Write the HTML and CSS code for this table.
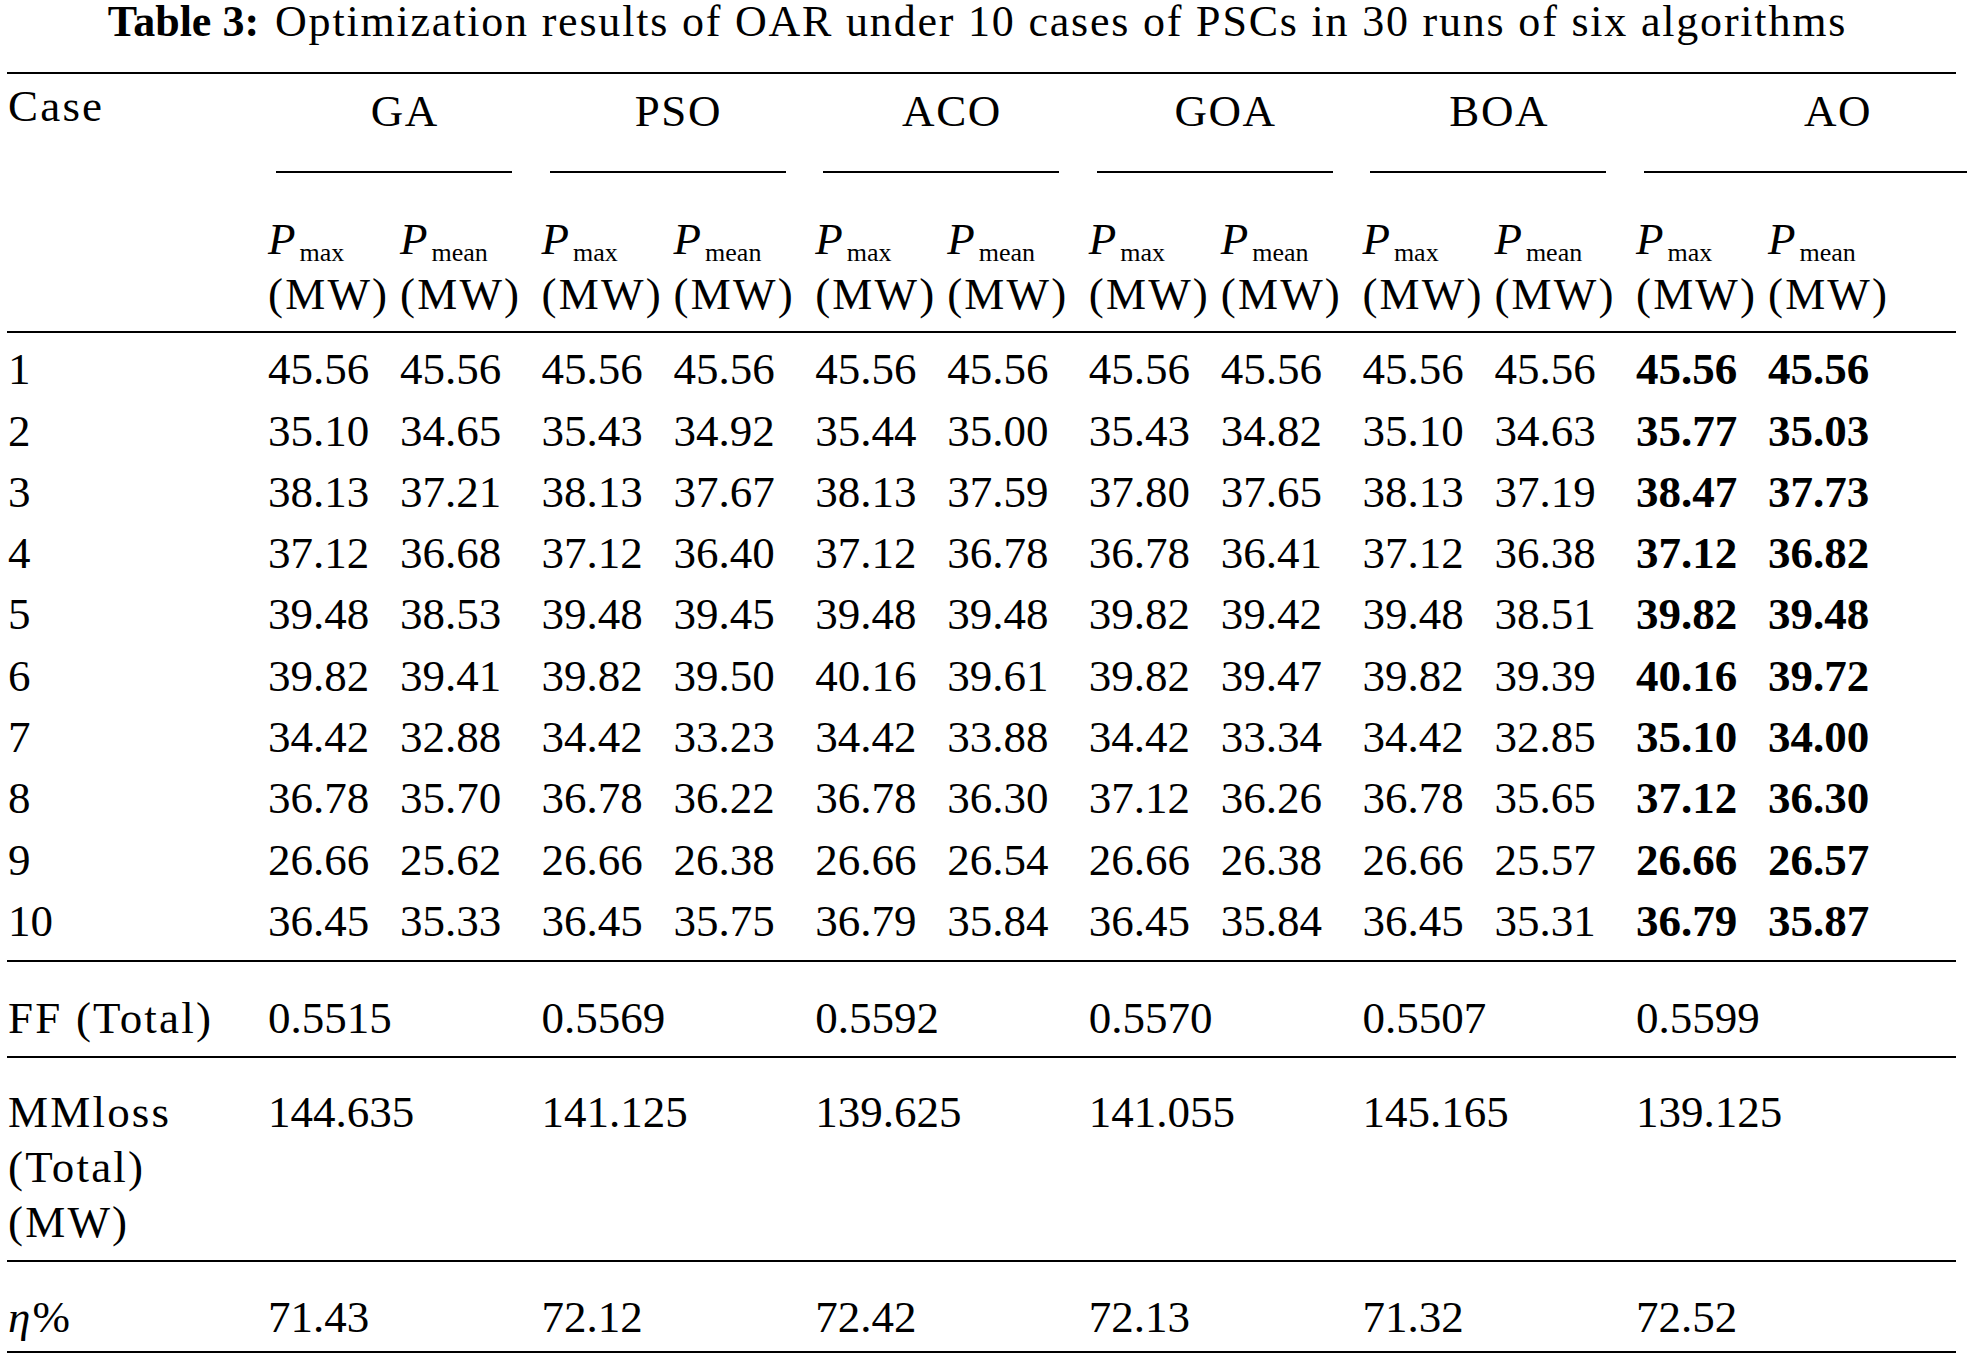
FILE: index.html
```html
<!DOCTYPE html>
<html lang="en">
<head>
<meta charset="utf-8">
<title>Table 3: Optimization results of OAR</title>
<link rel="stylesheet" href="styles.css">
</head>
<body>
<div class="page">
  <p class="caption"><b class="cap-num">Table 3:</b><span class="cap-text">Optimization results of OAR under 10 cases of PSCs in 30 runs of six algorithms</span></p>
  <table class="results">
    <colgroup>
      <col class="c-case">
      <col class="c-a"><col class="c-b">
      <col class="c-a"><col class="c-b">
      <col class="c-a"><col class="c-b">
      <col class="c-a"><col class="c-b">
      <col class="c-a"><col class="c-b">
      <col class="c-a"><col class="c-last">
    </colgroup>
    <thead>
      <tr class="groups">
        <th rowspan="2" class="case label">Case</th>
        <th colspan="2" class="grp"><span class="grp-name">GA</span><span class="grp-rule"></span></th>
        <th colspan="2" class="grp"><span class="grp-name">PSO</span><span class="grp-rule"></span></th>
        <th colspan="2" class="grp"><span class="grp-name">ACO</span><span class="grp-rule"></span></th>
        <th colspan="2" class="grp"><span class="grp-name">GOA</span><span class="grp-rule"></span></th>
        <th colspan="2" class="grp"><span class="grp-name">BOA</span><span class="grp-rule"></span></th>
        <th colspan="2" class="grp grp-ao"><span class="grp-name">AO</span><span class="grp-rule"></span></th>
      </tr>
      <tr class="units">
        <th><i>P</i><sub>max</sub><br><span class="label">(MW)</span></th>
        <th><i>P</i><sub>mean</sub><br><span class="label">(MW)</span></th>
        <th><i>P</i><sub>max</sub><br><span class="label">(MW)</span></th>
        <th><i>P</i><sub>mean</sub><br><span class="label">(MW)</span></th>
        <th><i>P</i><sub>max</sub><br><span class="label">(MW)</span></th>
        <th><i>P</i><sub>mean</sub><br><span class="label">(MW)</span></th>
        <th><i>P</i><sub>max</sub><br><span class="label">(MW)</span></th>
        <th><i>P</i><sub>mean</sub><br><span class="label">(MW)</span></th>
        <th><i>P</i><sub>max</sub><br><span class="label">(MW)</span></th>
        <th><i>P</i><sub>mean</sub><br><span class="label">(MW)</span></th>
        <th><i>P</i><sub>max</sub><br><span class="label">(MW)</span></th>
        <th><i>P</i><sub>mean</sub><br><span class="label">(MW)</span></th>
      </tr>
    </thead>
    <tbody class="data">
      <tr><td class="num">1</td><td>45.56</td><td>45.56</td><td>45.56</td><td>45.56</td><td>45.56</td><td>45.56</td><td>45.56</td><td>45.56</td><td>45.56</td><td>45.56</td><td class="best">45.56</td><td class="best">45.56</td></tr>
      <tr><td class="num">2</td><td>35.10</td><td>34.65</td><td>35.43</td><td>34.92</td><td>35.44</td><td>35.00</td><td>35.43</td><td>34.82</td><td>35.10</td><td>34.63</td><td class="best">35.77</td><td class="best">35.03</td></tr>
      <tr><td class="num">3</td><td>38.13</td><td>37.21</td><td>38.13</td><td>37.67</td><td>38.13</td><td>37.59</td><td>37.80</td><td>37.65</td><td>38.13</td><td>37.19</td><td class="best">38.47</td><td class="best">37.73</td></tr>
      <tr><td class="num">4</td><td>37.12</td><td>36.68</td><td>37.12</td><td>36.40</td><td>37.12</td><td>36.78</td><td>36.78</td><td>36.41</td><td>37.12</td><td>36.38</td><td class="best">37.12</td><td class="best">36.82</td></tr>
      <tr><td class="num">5</td><td>39.48</td><td>38.53</td><td>39.48</td><td>39.45</td><td>39.48</td><td>39.48</td><td>39.82</td><td>39.42</td><td>39.48</td><td>38.51</td><td class="best">39.82</td><td class="best">39.48</td></tr>
      <tr><td class="num">6</td><td>39.82</td><td>39.41</td><td>39.82</td><td>39.50</td><td>40.16</td><td>39.61</td><td>39.82</td><td>39.47</td><td>39.82</td><td>39.39</td><td class="best">40.16</td><td class="best">39.72</td></tr>
      <tr><td class="num">7</td><td>34.42</td><td>32.88</td><td>34.42</td><td>33.23</td><td>34.42</td><td>33.88</td><td>34.42</td><td>33.34</td><td>34.42</td><td>32.85</td><td class="best">35.10</td><td class="best">34.00</td></tr>
      <tr><td class="num">8</td><td>36.78</td><td>35.70</td><td>36.78</td><td>36.22</td><td>36.78</td><td>36.30</td><td>37.12</td><td>36.26</td><td>36.78</td><td>35.65</td><td class="best">37.12</td><td class="best">36.30</td></tr>
      <tr><td class="num">9</td><td>26.66</td><td>25.62</td><td>26.66</td><td>26.38</td><td>26.66</td><td>26.54</td><td>26.66</td><td>26.38</td><td>26.66</td><td>25.57</td><td class="best">26.66</td><td class="best">26.57</td></tr>
      <tr><td class="num">10</td><td>36.45</td><td>35.33</td><td>36.45</td><td>35.75</td><td>36.79</td><td>35.84</td><td>36.45</td><td>35.84</td><td>36.45</td><td>35.31</td><td class="best">36.79</td><td class="best">35.87</td></tr>
    </tbody>
    <tbody class="summary">
      <tr class="row-ff"><td class="label">FF (Total)</td><td colspan="2">0.5515</td><td colspan="2">0.5569</td><td colspan="2">0.5592</td><td colspan="2">0.5570</td><td colspan="2">0.5507</td><td colspan="2">0.5599</td></tr>
      <tr class="row-loss"><td class="label">MMloss<br>(Total)<br>(MW)</td><td colspan="2">144.635</td><td colspan="2">141.125</td><td colspan="2">139.625</td><td colspan="2">141.055</td><td colspan="2">145.165</td><td colspan="2">139.125</td></tr>
      <tr class="row-eta"><td class="label"><i>η</i>%</td><td colspan="2">71.43</td><td colspan="2">72.12</td><td colspan="2">72.42</td><td colspan="2">72.13</td><td colspan="2">71.32</td><td colspan="2">72.52</td></tr>
    </tbody>
  </table>
</div>
</body>
</html>
```

FILE: styles.css
```css
html, body {
  margin: 0;
  padding: 0;
  background: #ffffff;
}

body {
  font-family: "Liberation Serif", "Times New Roman", serif;
  color: #000000;
}

.page {
  padding-left: 7px;
  width: 1949px;
}

.caption {
  margin: 0 0 28px 0;
  padding-right: 8px;
  font-size: 44px;
  line-height: 44px;
  text-align: center;
  white-space: nowrap;
}

.cap-num {
  font-weight: bold;
}

.cap-text {
  margin-left: 16px;
  letter-spacing: 1.8px;
}

.results {
  width: 1949px;
  table-layout: fixed;
  border-collapse: separate;
  border-spacing: 0;
  border-top: 2px solid #000;
  font-size: 45px;
  line-height: 55px;
}

.c-case { width: 261px; }
.c-a { width: 132px; }
.c-b { width: 141.6px; }
.c-last { width: 188px; }

.results th,
.results td {
  padding: 0;
  text-align: left;
  vertical-align: top;
  font-weight: normal;
  white-space: nowrap;
}

.results .label {
  letter-spacing: 2.2px;
}

.results td.best {
  font-weight: bold;
}

/* header row: algorithm groups */
.results .case {
  padding: 5px 0 0 1px;
  border-bottom: 2px solid #000;
}

.results .grp {
  padding-top: 10px;
}

.grp-name {
  display: block;
  text-align: center;
  letter-spacing: 1.6px;
}

.grp-ao .grp-name {
  padding-left: 84px;
}

.grp-rule {
  display: block;
  margin: 32px 0 0 8px;
  width: 236px;
  border-top: 2px solid #000;
}

.grp-ao .grp-rule {
  width: 323px;
}

/* header row: units */
.results .units th {
  padding: 39px 0 9px 0;
  border-bottom: 2px solid #000;
}

.units i {
  font-style: italic;
}

.units sub {
  font-size: 26px;
  line-height: 0;
  vertical-align: -7px;
  margin-left: 4px;
}

/* data rows */
.results .data td {
  padding: 3.15px 0;
}

.results .data td.num {
  padding-left: 1px;
}

.results .data tr:first-child td {
  padding-top: 9.3px;
}

.results .data tr:last-child td {
  padding-bottom: 11px;
  border-bottom: 2px solid #000;
}

/* summary rows */
.results .summary td {
  border-bottom: 2px solid #000;
}

.results .summary td.label {
  padding-left: 1px;
}

.results .row-ff td {
  padding-top: 29px;
  padding-bottom: 10px;
}

.results .row-loss td {
  padding-top: 27.5px;
  padding-bottom: 9.7px;
}

.results .row-eta td {
  padding-top: 28.3px;
  padding-bottom: 6px;
}

.row-eta i {
  font-style: italic;
}
```
